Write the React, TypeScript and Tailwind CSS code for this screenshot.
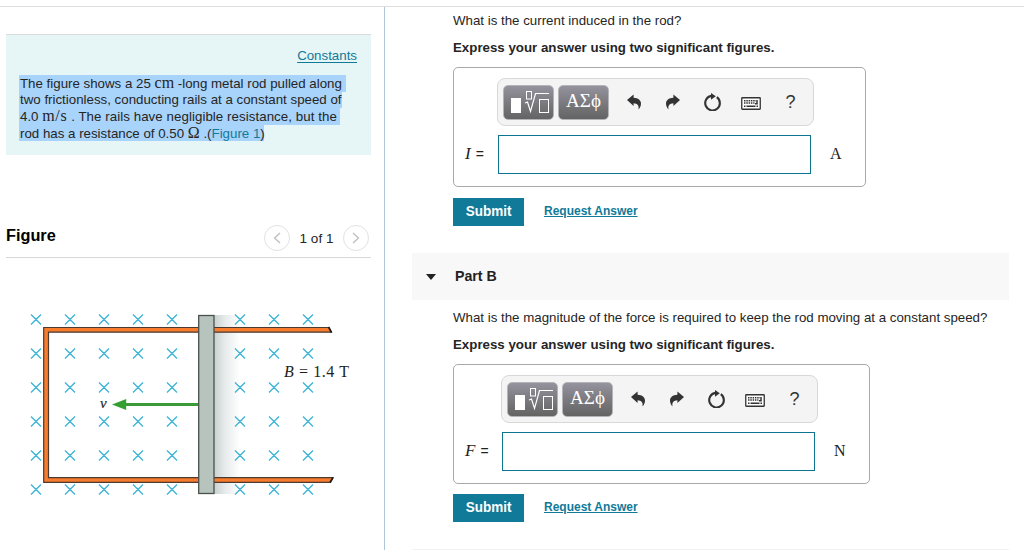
import React from "react";

const SANS = "font-['Liberation_Sans',Arial,sans-serif]";
const SERIF = "font-['Liberation_Serif','Times_New_Roman',serif]";

const FIELD_COLUMNS = [36, 70, 104, 138, 172, 240, 274, 308];
const FIELD_ROWS = [319.5, 353.5, 387.5, 421.5, 455.5, 489.5];

function RodFigure() {
  return (
    <svg className="block h-[210px] w-[350px]" viewBox="20 300 350 210">
      <defs>
        <linearGradient id="rodShadow" x1="0" x2="1" y1="0" y2="0">
          <stop offset="0" stopColor="#c9d1cf" />
          <stop offset="0.45" stopColor="#e8ecec" />
          <stop offset="1" stopColor="#ffffff" />
        </linearGradient>
      </defs>
      <rect x="214" y="315" width="26" height="179" fill="url(#rodShadow)" />
      <path
        d="M329 327.5H43.7V482.3H330.5L333 477.7H48.5V332.2H331.5Z"
        fill="#f97b2c"
        stroke="#4a3a30"
        strokeWidth="1.2"
      />
      <path d="M328.5 327l3 5.5M333 477.500l-3 5" stroke="#1c1c1c" strokeWidth="1.6" />
      <path
        d={FIELD_ROWS.flatMap((y) =>
          FIELD_COLUMNS.map((x) => `M${x - 5} ${y - 5}l10 10m0-10l-10 10`)
        ).join("")}
        stroke="#3fb4d6"
        strokeWidth="1.4"
        fill="none"
      />
      <path d="M124 404.500H199" stroke="#3a9a35" strokeWidth="2.8" />
      <path d="M112 404.500L126.200 399V410Z" fill="#35a032" />
      <rect x="198.700" y="315.500" width="15.300" height="178" fill="#b7c4be" stroke="#4a504e" strokeWidth="1.300" />
      <g className={SERIF} fill="#231f20">
        <text x="100" y="408" fontSize="15" fontStyle="italic" stroke="#231f20" strokeWidth="0.2">v</text>
        <text x="284" y="377" fontSize="16" textLength="65" lengthAdjust="spacing">
          <tspan fontStyle="italic">B</tspan> = 1.4 T
        </text>
      </g>
    </svg>
  );
}

function UndoIcon({ flipped = false }: { flipped?: boolean }) {
  return (
    <svg className={flipped ? "ml-px h-4 w-4 -scale-x-100" : "h-4 w-4"} viewBox="0 0 16 16">
      <path
        d="M1 6L7.600 0.500V3.700C12.300 3.900 15 6.300 15 9.600C15 12 14 14 12.500 15.400C13.200 11.500 11.500 9.400 7.600 9.300V12Z"
        fill="#333"
      />
    </svg>
  );
}

function ResetIcon() {
  return (
    <svg className="h-[18px] w-[18px]" viewBox="0 0 18 18">
      <path d="M13.800 4.200A7.300 7.300 0 1 1 8.500 2.900" fill="none" stroke="#333" strokeWidth="2.100" />
      <path d="M8 0L12.800 3.200L8 6.700Z" fill="#333" />
    </svg>
  );
}

function KeyboardIcon() {
  return (
    <svg className="mt-[3px] h-[13px] w-5" viewBox="0 0 20 13">
      <rect x="0.750" y="0.750" width="18.500" height="11.500" rx="0.500" fill="#fff" stroke="#333" strokeWidth="1.300" />
      <path d="M3 3.700h12M3 6h10.500" stroke="#333" strokeWidth="1.400" strokeDasharray="1.500 0.800" />
      <path d="M16 3v3.700h-2" fill="none" stroke="#333" strokeWidth="1.500" />
      <path d="M3 9.300h1.500M5.500 9.300h9M15.500 9.300H17" stroke="#333" strokeWidth="1.500" />
    </svg>
  );
}

const toolButton =
  "flex h-[35px] w-[51px] items-center justify-center rounded-[5px] border border-[#b4b4b8] bg-linear-to-b from-[#96949f] to-[#626262] bg-origin-border";
const iconButton = "flex h-9 w-[39px] items-center justify-center";

function Toolbar() {
  return (
    <div className="-ml-px flex h-12 w-[317px] items-center rounded-lg border border-[#d8d8d8] bg-[#f4f4f4] pl-[5px]">
      <button className={toolButton} aria-label="Templates">
        <svg className="h-[31px] w-[47px]" viewBox="0 0 47 31">
          <rect x="6" y="11" width="10" height="15" fill="#fff" />
          <g fill="none" stroke="#fff">
            <rect x="21.500" y="4.500" width="5" height="7.500" />
            <path d="M20 16l2.500-1 3 9.500L30.500 6.500H44" strokeWidth="1.200" />
            <rect x="34.500" y="12.500" width="9" height="13" />
          </g>
        </svg>
      </button>
      <button className={`${toolButton} ml-1 ${SERIF} pb-[3px] text-[19px] leading-none text-white`}>ΑΣϕ</button>
      <div className="ml-[5px] flex">
        <button className={iconButton} aria-label="Undo"><UndoIcon /></button>
        <button className={iconButton} aria-label="Redo"><UndoIcon flipped /></button>
        <button className={iconButton} aria-label="Reset"><ResetIcon /></button>
        <button className={iconButton} aria-label="Keyboard"><KeyboardIcon /></button>
        <button className={`${iconButton} pl-[2px] text-[18px] text-[#333]`}>?</button>
      </div>
    </div>
  );
}

type AnswerProps = { symbol: string; unit: string; wide?: boolean };

function Answer({ symbol, unit, wide = false }: AnswerProps) {
  return (
    <>
      <div className={`${wide ? "w-[417px]" : "w-[413px]"} flex h-[120px] rounded-[5px] border border-[#a9a9a9] pt-[10px]`}>
        <div className={`${wide ? "w-12" : "w-11"} shrink-0 pt-[66px] pl-[11px] text-[14px] leading-5 whitespace-nowrap text-[#222]`}>
          <span className={`${SERIF} text-[17px] italic`}>{symbol}</span>
          <span className="ml-[5px]">=</span>
        </div>
        <div>
          <Toolbar />
          <div className="mt-[9px] flex items-center">
            <input className="block h-[39px] w-[313px] border border-[#0d7592] bg-white outline-none" aria-label={symbol} />
            <span className={`${SERIF} ml-[19px] pb-[2px] text-[16px] text-[#222]`}>{unit}</span>
          </div>
        </div>
      </div>
      <div className={`${wide ? "mt-[10px]" : "mt-[11px]"} flex h-7 items-center`}>
        <button className="h-7 w-[71px] bg-[#117a99] text-[14.500px] font-bold text-white">
          <span className="inline-block origin-center scale-x-[0.93]">Submit</span>
        </button>
        <a className="ml-5 pb-[2px] text-[12px] font-bold text-[#117a99] underline underline-offset-1">Request Answer</a>
      </div>
    </>
  );
}

export default function App() {
  return (
    <div className={`${SANS} h-[550px] w-[1024px] overflow-hidden bg-white pt-[6px] text-[13.300px] text-[#252525]`}>
      <div className="flex h-[544px] border-t border-[#dedede]">
        <aside className="w-[385px] shrink-0 border-r border-[#b0c7d9] pt-[27px] pl-[6px]">
          <section className="h-[121px] w-[365px] border-t border-[#d8dcdc] bg-[#e6f5f5] px-[14px]">
            <div className="h-[40px] pt-[13px] text-right leading-4">
              <a className="text-[#117a99] underline underline-offset-2">Constants</a>
            </div>
            <div className="-ml-px leading-[15px] whitespace-nowrap">
              <div className="h-[16.500px] w-[327px] bg-[#a8d3fa] pl-px">
                The figure shows a 25 <span className={`${SERIF} text-[16px] leading-none`}>cm</span> -long metal rod pulled along
              </div>
              <div className="h-[16.500px] w-[323px] bg-[#a8d3fa] pl-px">two frictionless, conducting rails at a constant speed of</div>
              <div className="h-[16.500px] w-[321px] bg-[#a8d3fa] pl-px">
                4.0 <span className={`${SERIF} text-[16px] leading-none tracking-[0.700px]`}>m/s</span>
                <span className="tracking-[0.060px]"> . The rails have negligible resistance, but the</span>
              </div>
              <div className="h-[16.500px] w-[245px] bg-[#a8d3fa] pl-px">
                rod has a resistance of 0.50 <span className={`${SERIF} text-[16px] leading-none`}>Ω</span> .(<a className="text-[#117a99]">Figure 1</a>)
              </div>
            </div>
          </section>
          <header className="mt-[63px] flex h-10 w-[365px] border-b border-[#d8d8d8]">
            <h2 className="pt-[7px] text-[16.300px] leading-5 font-bold text-black">Figure</h2>
            <div className="mt-[6px] ml-auto flex h-[27px] items-center pr-[2px]">
              <button className="flex h-[26px] w-[26px] items-center justify-center rounded-full border border-[#e2e2e2]" aria-label="Previous">
                <svg className="h-3 w-2" viewBox="0 0 8 12" fill="none" stroke="#bdbdbd" strokeWidth="1.300"><path d="M7 1L1.500 6L7 11" /></svg>
              </button>
              <span className="w-[53px] pt-1 text-center text-[13.500px]">1 of 1</span>
              <button className="flex h-[26px] w-[26px] items-center justify-center rounded-full border border-[#e2e2e2]" aria-label="Next">
                <svg className="h-3 w-2" viewBox="0 0 8 12" fill="none" stroke="#bdbdbd" strokeWidth="1.300"><path d="M1 1L6.500 6L1 11" /></svg>
              </button>
            </div>
          </header>
          <div className="mt-[42px] ml-[14px]"><RodFigure /></div>
        </aside>
        <main className="ml-[27px] w-[597px]">
          <section className="h-[246px] pt-[6px] pl-[41px]">
            <p className="leading-4">What is the current induced in the rod?</p>
            <p className="mt-[11px] mb-[11px] leading-4 font-bold">Express your answer using two significant figures.</p>
            <Answer symbol="I" unit="A" />
          </section>
          <header className="flex h-[47px] items-center bg-[#f8f8f8] pl-[14px]">
            <svg className="h-[6px] w-[10px]" viewBox="0 0 10 6"><path d="M0 0H10L5 6Z" fill="#222" /></svg>
            <h2 className="ml-[19px] text-[14.200px] font-bold text-[#222]">Part B</h2>
          </header>
          <section className="h-[249px] pt-[10px] pl-[41px]">
            <p className="leading-4 whitespace-nowrap">What is the magnitude of the force is required to keep the rod moving at a constant speed?</p>
            <p className="mt-[11px] mb-[11px] leading-4 font-bold">Express your answer using two significant figures.</p>
            <Answer symbol="F" unit="N" wide />
          </section>
          <div className="border-t border-[#f2f2f2]" />
        </main>
      </div>
    </div>
  );
}
